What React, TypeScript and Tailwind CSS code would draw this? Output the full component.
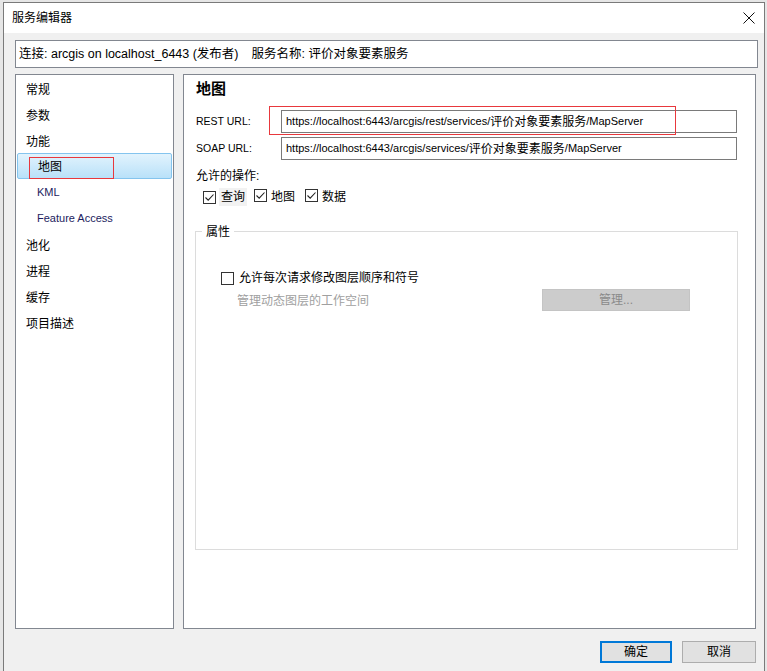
import React from "react";

const FONT = "[font-family:'Liberation_Sans','Noto_Sans_CJK_SC',sans-serif]";

function Check({ checked }: { checked?: boolean }) {
  return (
    <span className="inline-flex w-[13px] h-[13px] border border-[#333333] bg-white items-center justify-center shrink-0">
      {checked && (
        <svg width="11" height="11" viewBox="0 0 11 11">
          <path d="M1.5 5.5 L4.2 8.2 L9.5 2.5" fill="none" stroke="#222222" strokeWidth="1.1" />
        </svg>
      )}
    </span>
  );
}

function NavItem({ label, sub, selected }: { label: string; sub?: boolean; selected?: boolean }) {
  if (selected) {
    return (
      <div className="relative h-[26px] mx-[1px] rounded-[2px] border border-[#84c4ee] bg-gradient-to-b from-[#e2f3fd] to-[#b9e1f9] flex items-center pt-[2px] pl-[20px] text-[12px] text-black">
        {label}
        <div className="absolute left-[11px] top-[3px] w-[85px] h-[22px] border border-[#e8383d]" />
      </div>
    );
  }
  return (
    <div
      className={
        sub
          ? "h-[26px] flex items-center pl-[21px] text-[11px] text-[#1c1c5e]"
          : "h-[26px] flex items-center pt-[3px] pl-[10px] text-[12px] text-black"
      }
    >
      {label}
    </div>
  );
}

export default function App() {
  return (
    <div className={`w-[767px] h-[671px] overflow-hidden bg-[#e6e6e6] pl-[3px] pt-[2px] pr-[2px] ${FONT}`}>
      <div className="h-[680px] border border-[#7a7a7a] bg-[#f0f0f0] flex flex-col">
        {/* title bar */}
        <div className="h-[30px] bg-white flex items-center justify-between pl-[8px] pr-[9px] shrink-0">
          <span className="text-[12px] text-black">服务编辑器</span>
          <svg width="12" height="12" viewBox="0 0 12 12">
            <path d="M0.5 0.5 L11.5 11.5 M11.5 0.5 L0.5 11.5" stroke="#111111" strokeWidth="1" />
          </svg>
        </div>

        {/* connection box */}
        <div className="mt-[7px] ml-[11px] w-[743px] h-[28px] border border-[#828790] bg-white flex items-center pl-[3px] text-[12.5px] text-black shrink-0">
          <span>连接: arcgis on localhost_6443 (发布者)</span>
          <span className="ml-[13px]">服务名称: 评价对象要素服务</span>
        </div>

        {/* main area */}
        <div className="mt-[6px] ml-[11px] flex gap-[9px] h-[555px] shrink-0">
          {/* nav */}
          <div className="w-[159px] h-full border border-[#828790] bg-white">
            <NavItem label="常规" />
            <NavItem label="参数" />
            <NavItem label="功能" />
            <NavItem label="地图" selected />
            <NavItem label="KML" sub />
            <NavItem label="Feature Access" sub />
            <NavItem label="池化" />
            <NavItem label="进程" />
            <NavItem label="缓存" />
            <NavItem label="项目描述" />
          </div>

          {/* content */}
          <div className="w-[573px] h-full border border-[#828790] bg-white pt-[4px] pl-[11px]">
            <div className="h-[20px] flex items-center pl-[1px] text-[15px] font-bold text-black">地图</div>

            <div className="relative mt-[11px] h-[23px] flex items-center">
              <span className="w-[86px] pl-[1px] text-[10.5px] text-black">REST URL:</span>
              <div className="w-[456px] h-[23px] border border-[#7a7a7a] bg-white flex items-center pl-[4px] text-[11px] text-black">
                https://localhost:6443/arcgis/rest/services/<span className="text-[12px]">评价对象要素服务</span>/MapServer
              </div>
              <div className="absolute left-[74px] top-[-4px] w-[407px] h-[29px] border border-[#e8383d]" />
            </div>

            <div className="mt-[4px] h-[23px] flex items-center">
              <span className="w-[86px] pl-[1px] text-[10.5px] text-black">SOAP URL:</span>
              <div className="w-[456px] h-[23px] border border-[#7a7a7a] bg-white flex items-center pl-[4px] text-[11px] text-black">
                https://localhost:6443/arcgis/services/<span className="text-[12px]">评价对象要素服务</span>/MapServer
              </div>
            </div>

            <div className="mt-[7px] h-[18px] flex items-center pl-[1px] text-[12px] text-black">允许的操作:</div>

            <div className="mt-[4px] h-[16px] flex items-center pl-[8px] text-[12px] text-black">
              <Check checked />
              <span className="ml-[3px] px-[2px] bg-[#f2f2f2]">查询</span>
              <span className="ml-[7px]"><Check checked /></span>
              <span className="ml-[4px]">地图</span>
              <span className="ml-[10px]"><Check checked /></span>
              <span className="ml-[4px]">数据</span>
            </div>

            {/* group box */}
            <div className="relative mt-[26px] w-[543px] h-[319px] border border-[#dcdcdc]">
              <span className="absolute left-[6px] top-[-8px] px-[4px] bg-white text-[12px] leading-[16px] text-black">属性</span>
              <div className="mt-[38px] ml-[25px] h-[16px] flex items-center text-[12px] text-black">
                <Check />
                <span className="ml-[5px]">允许每次请求修改图层顺序和符号</span>
              </div>
              <div className="mt-[3px] ml-[41px] flex items-center">
                <span className="w-[305px] pt-[2px] text-[12px] text-[#a0a0a0]">管理动态图层的工作空间</span>
                <div className="w-[148px] h-[22px] bg-[#cccccc] border border-[#c4c4c4] flex items-center justify-center text-[12px] text-[#8a8a8a]">
                  管理...
                </div>
              </div>
            </div>
          </div>
        </div>

        {/* buttons */}
        <div className="mt-[12px] flex justify-end gap-[10px] pr-[8px] shrink-0">
          <div className="w-[72px] h-[22px] border-2 border-[#0078d7] bg-[#e1e1e1] flex items-center justify-center text-[12px] text-black">确定</div>
          <div className="w-[74px] h-[22px] border border-[#adadad] bg-[#e1e1e1] flex items-center justify-center text-[12px] text-black">取消</div>
        </div>
      </div>
    </div>
  );
}
